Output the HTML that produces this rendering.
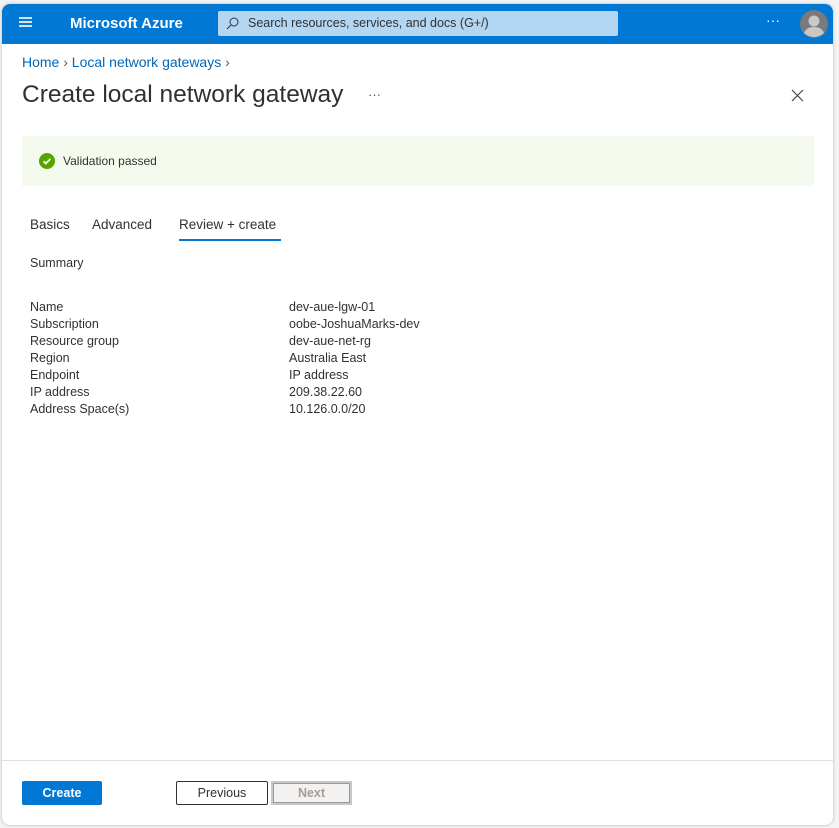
<!DOCTYPE html>
<html><head><style>
body{margin:0;width:839px;height:828px;background:#f3f3f3;font-family:"Segoe UI","Liberation Sans",sans-serif;overflow:hidden;position:relative}
.win{position:absolute;left:2px;top:4px;width:831px;height:821px;background:#fff;border-radius:8px;overflow:hidden;box-shadow:0 0 3px rgba(0,0,0,.25)}
.hdr{position:absolute;left:0;top:0;width:100%;height:40px;background:#0078d4}
.abs{position:absolute;white-space:nowrap}
.lbl{font-size:12.5px;color:#323130}
</style></head><body>
<div class="win">
<div class="hdr">
 <div class="abs" style="left:17px;top:13px;width:13px;height:2px;background:#cfe3f5;box-shadow:0 4px 0 #cfe3f5,0 8px 0 #cfe3f5"></div>
 <div class="abs" style="left:68px;top:11px;color:#fff;font-size:15px;font-weight:bold">Microsoft Azure</div>
 <div class="abs" style="left:216px;top:7px;width:400px;height:25px;background:#b3d6f2;border-radius:2px"></div>
 <svg class="abs" style="left:224px;top:13px" width="13" height="13" viewBox="0 0 13 13"><circle cx="8" cy="5" r="4" fill="none" stroke="#333" stroke-width="1"/><line x1="5" y1="8" x2="1" y2="12" stroke="#333"/></svg>
 <div class="abs" style="left:246px;top:12px;font-size:12.5px;color:#323130">Search resources, services, and docs (G+/)</div>
 <div class="abs" style="left:764px;top:8px;color:#fff;font-size:14px">···</div>
 <svg class="abs" style="left:798px;top:6px" width="28" height="28" viewBox="0 0 28 28"><circle cx="14" cy="14" r="14" fill="#7a7a7a"/><circle cx="14" cy="11" r="5.5" fill="#c8c8c8"/><path d="M4 23c2-5 6-6 10-6s8 1 10 6c-3 3-7 4-10 4s-7-1-10-4z" fill="#c8c8c8"/></svg>
</div>
<div class="abs" style="left:20px;top:50px;font-size:14px;color:#0067b8">Home <span style="color:#605e5c">&#x203A;</span> Local network gateways <span style="color:#605e5c">&#x203A;</span></div>
<div class="abs" style="left:20px;top:77px;font-size:24.5px;color:#323130">Create local network gateway</div>
<div class="abs" style="left:366px;top:83px;font-size:13px;color:#555">···</div>
<svg class="abs" style="left:789px;top:85px" width="13" height="13"><path d="M1 1L12 12M12 1L1 12" stroke="#444" stroke-width="1.2"/></svg>
<div class="abs" style="left:20px;top:132px;width:792px;height:50px;background:#f4fbee"></div>
<svg class="abs" style="left:37px;top:149px" width="16" height="16"><circle cx="8" cy="8" r="8" fill="#57a300"/><path d="M4.5 8.2l2.3 2.3 4.6-4.6" stroke="#fff" stroke-width="1.8" fill="none"/></svg>
<div class="abs" style="left:61px;top:150px;font-size:12px;color:#323130">Validation passed</div>
<div class="abs" style="left:28px;top:213px;font-size:13.5px;color:#323130">Basics</div>
<div class="abs" style="left:90px;top:213px;font-size:13.5px;color:#323130">Advanced</div>
<div class="abs" style="left:177px;top:213px;font-size:13.5px;color:#323130">Review + create</div>
<div class="abs" style="left:177px;top:235px;width:102px;height:2px;background:#0078d4"></div>
<div class="abs lbl" style="left:28px;top:252px">Summary</div>
<div class="abs lbl" style="left:28px;top:295px;line-height:17px">Name<br>Subscription<br>Resource group<br>Region<br>Endpoint<br>IP address<br>Address Space(s)</div>
<div class="abs lbl" style="left:287px;top:295px;line-height:17px">dev-aue-lgw-01<br>oobe-JoshuaMarks-dev<br>dev-aue-net-rg<br>Australia East<br>IP address<br>209.38.22.60<br>10.126.0.0/20</div>
<div class="abs" style="left:0;top:756px;width:100%;height:1px;background:#e1dfdd"></div>
<div class="abs" style="left:20px;top:777px;width:80px;height:24px;background:#0078d4;border-radius:2px;color:#fff;font-size:12.5px;font-weight:bold;text-align:center;line-height:24px">Create</div>
<div class="abs" style="left:174px;top:777px;width:90px;height:22px;border:1px solid #323130;border-radius:2px;color:#323130;font-size:12.5px;text-align:center;line-height:22px">Previous</div>
<div class="abs" style="left:269px;top:777px;width:77px;height:20px;border:2px solid #c8c8c8;outline:1px solid #999;outline-offset:-3px;background:#f3f2f1;color:#a19f9d;font-size:12.5px;font-weight:bold;text-align:center;line-height:20px">Next</div>
</div>
</body></html>
